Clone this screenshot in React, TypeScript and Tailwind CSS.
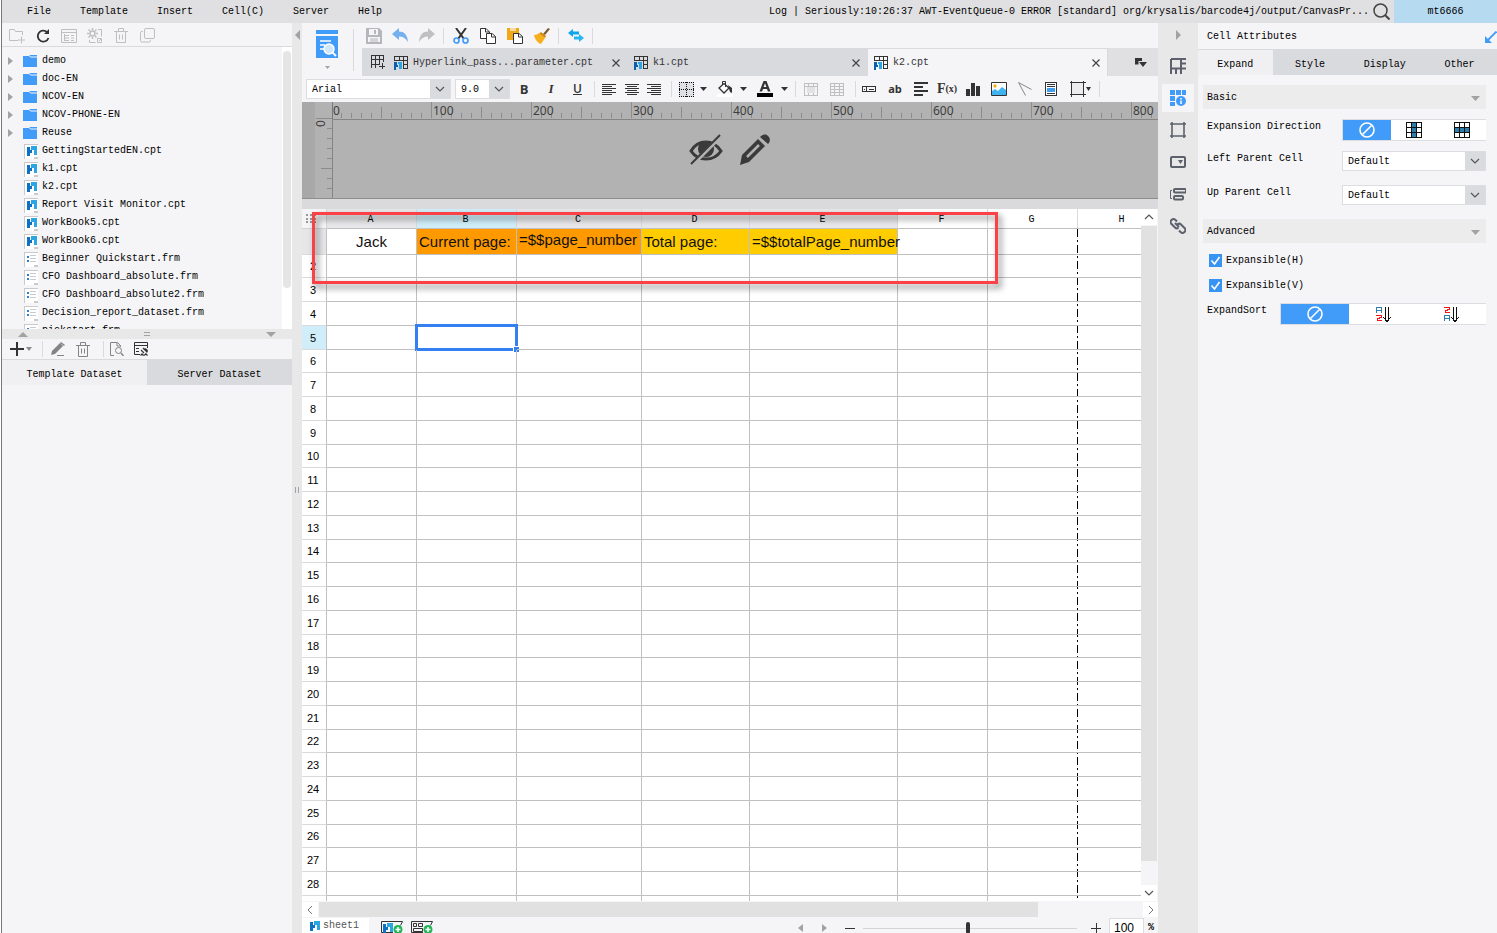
import { useState } from 'react';
import type { ReactNode } from 'react';
import clsx from 'clsx';

const BLUE = '#419bf9';
const DARK = '#333334';
const MUTED = '#bfbfc1';

const MENUS = ['File', 'Template', 'Insert', 'Cell(C)', 'Server', 'Help'];
const FOLDERS = ['demo', 'doc-EN', 'NCOV-EN', 'NCOV-PHONE-EN', 'Reuse'];
const FILES = [
  'GettingStartedEN.cpt',
  'k1.cpt',
  'k2.cpt',
  'Report Visit Monitor.cpt',
  'WorkBook5.cpt',
  'WorkBook6.cpt',
  'Beginner Quickstart.frm',
  'CFO Dashboard_absolute.frm',
  'CFO Dashboard_absolute2.frm',
  'Decision_report_dataset.frm',
  'pickstart.frm',
];
const DOCS = ['Hyperlink_pass...parameter.cpt', 'k1.cpt', 'k2.cpt'];

const COLUMNS = [
  { id: 'A', width: 'w-[90px]' },
  { id: 'B', width: 'w-[100px]' },
  { id: 'C', width: 'w-[125px]' },
  { id: 'D', width: 'w-[108px]' },
  { id: 'E', width: 'w-[148px]' },
  { id: 'F', width: 'w-[90px]' },
  { id: 'G', width: 'w-[90px]' },
  { id: 'H', width: 'w-[90px]' },
];

const CELLS: Record<string, { text: string; className: string }> = {
  A1: { text: 'Jack', className: 'text-center' },
  B1: { text: 'Current page:', className: 'bg-[#ff9900]' },
  C1: { text: '=$$page_number', className: 'bg-[#ff9900] align-top' },
  D1: { text: 'Total page:', className: 'bg-[#ffcc00]' },
  E1: { text: '=$$totalPage_number', className: 'bg-[#ffcc00]' },
};

const ROWS = Array.from({ length: 34 }, (_, i) => i + 1);

function Svg({ w = 16, h = 16, children, crisp }: { w?: number; h?: number; children: ReactNode; crisp?: boolean }) {
  return (
    <svg
      width={w}
      height={h}
      viewBox={`0 0 ${w} ${h}`}
      fill="none"
      className="block shrink-0"
      shapeRendering={crisp ? 'crispEdges' : undefined}
      aria-hidden="true"
    >
      {children}
    </svg>
  );
}

function Caret({ color = DARK }: { color?: string }) {
  return (
    <Svg w={7} h={4}>
      <path d="M0 0h7L3.500 4z" fill={color} />
    </Svg>
  );
}

function Chevron({ d = 'M1 1l4 4 4-4' }: { d?: string }) {
  return (
    <Svg w={10} h={6}>
      <path d={d} stroke="#555" strokeWidth="1.2" />
    </Svg>
  );
}

function ToolButton({ label, className, children }: { label: string; className: string; children: ReactNode }) {
  return (
    <button type="button" aria-label={label} title={label} className={clsx('flex shrink-0 items-center justify-center', className)}>
      {children}
    </button>
  );
}

function Divider({ className }: { className: string }) {
  return (
    <span className={clsx('flex shrink-0 justify-center', className)}>
      <span className="h-4 w-px bg-[#dadadc]" />
    </span>
  );
}

function TrashIcon({ color }: { color: string }) {
  return (
    <Svg w={14} h={15}>
      <path d="M0 3.500h14M4.500 3V.5h5V3M2.500 4v10.500h9V4M5.500 6.500v5M8.500 6.500v5" stroke={color} />
    </Svg>
  );
}

function FolderIcon() {
  return (
    <Svg w={14} h={12}>
      <path d="M0 1h6l1-1h7v12H0z" fill={BLUE} />
      <path d="M6 .5l1.500 1.500H14" stroke="#f5f5f7" />
    </Svg>
  );
}

function HLogo({ x = 0, y = 0 }: { x?: number; y?: number }) {
  return (
    <g transform={`translate(${x} ${y})`}>
      <path d="M0 1h3v3h2v3H3v3H0z" fill="#0c70c4" />
      <path d="M4 0h6v9H7V4H4z" fill="#2ba6e3" />
    </g>
  );
}

function FileIcon({ form }: { form: boolean }) {
  return (
    <Svg w={14} h={15} crisp>
      <path d="M0 0h14v15H0z" fill="#fff" />
      <path d="M.5 15V.5H14" stroke="#c9cacc" />
      <path d="M10 13h4v2h-4z" fill="#c9cacc" />
      {form ? (
        <>
          <path d="M3 4h2v2H3zM3 8h2v2H3z" fill="#2a7fd4" />
          <path d="M6 3.500h6M6 6.500h6M6 9.500h6" stroke="#c9cacc" />
        </>
      ) : (
        <HLogo x={3} y={2} />
      )}
    </Svg>
  );
}

function SheetIcon() {
  return (
    <Svg w={14} h={14} crisp>
      <path d="M.5 5V.5h13v12H9M.5 4.500h13M5.500 0v5M9.500 0v13M9 8.500h5" stroke={DARK} />
      <path d="M0 6h3v3h1v2H2v3H0z" fill="#0c5fae" />
      <path d="M4 6h4v7H5V8H4z" fill="#2ba6e3" />
    </Svg>
  );
}

function AlignIcon({ d }: { d: string }) {
  return (
    <Svg w={14} h={13} crisp>
      <path d={d} stroke={DARK} />
    </Svg>
  );
}

function NoneIcon() {
  return (
    <Svg>
      <circle cx="8" cy="8" r="7" stroke="#fff" strokeWidth="1.600" />
      <path d="M3.500 12.500l9-9" stroke="#fff" strokeWidth="1.600" />
    </Svg>
  );
}

function GridIcon({ fill }: { fill: string }) {
  return (
    <Svg crisp>
      <path d="M0 0h16v16H0z" fill="#fff" />
      <path d={fill} fill="#2f7fae" />
      <path d="M.5.5h15v15H.5zM5.500 0v16M10.500 0v16M0 5.500h16M0 10.500h16" stroke="#111" />
    </Svg>
  );
}

function SortIcon({ reverse }: { reverse?: boolean }) {
  const a = 'M.5 6V.5h5V6M0 3.500h6';
  const z = 'M0 .5h5.500V2.500H3.500V3.500H1.500V5.500H6';
  return (
    <Svg w={15} h={15} crisp>
      <path d={reverse ? z : a} stroke={reverse ? '#f01818' : '#2f7fae'} />
      <g transform="translate(0 8)">
        <path d={reverse ? a : z} stroke={reverse ? '#2f7fae' : '#f01818'} />
      </g>
      <path d="M9.500 0v12M12.500 0v12M7.500 10.500l3.500 4 3.500-4" stroke="#111" />
    </Svg>
  );
}

function Dropdown({ label, value, className, arrow }: { label: string; value: string; className: string; arrow: string }) {
  return (
    <span className={clsx('grid h-5 shrink-0 border border-[#dcdde0] bg-white', className)}>
      <select aria-label={label} defaultValue={value} className="min-w-0 appearance-none bg-transparent pt-px pl-[5px] outline-none [grid-area:1/1]">
        <option>{value}</option>
      </select>
      <span className={clsx('pointer-events-none flex items-center justify-center justify-self-end bg-[#d9dbde] [grid-area:1/1]', arrow)}>
        <Chevron />
      </span>
    </span>
  );
}

function MenuBar() {
  return (
    <header className="flex h-[23px] shrink-0 items-center bg-[#e0e0e2]">
      <nav className="flex gap-[29px] pl-[25px]">
        {MENUS.map((menu) => (
          <button key={menu} type="button">
            {menu}
          </button>
        ))}
      </nav>
      <div className="ml-auto flex h-full items-center">
        <p className="whitespace-pre">
          Log | Seriously:10:26:37 AWT-EventQueue-0 ERROR [standard] org/krysalis/barcode4j/output/CanvasPr...
        </p>
        <ToolButton label="Search" className="w-[25px]">
          <Svg w={17} h={17}>
            <circle cx="7.500" cy="7.500" r="6.500" stroke="#444" strokeWidth="1.500" />
            <path d="M12 12l4.500 4.500" stroke="#444" strokeWidth="2" />
          </Svg>
        </ToolButton>
        <button type="button" className="h-full w-[103px] bg-[#b6daf0]">
          mt6666
        </button>
      </div>
    </header>
  );
}

function FileToolbar() {
  return (
    <div className="flex h-6 shrink-0 items-center border-b border-[#dadadc] pt-0.5 pl-0.5">
      <ToolButton label="New folder" className="w-[26px]">
        <Svg>
          <path d="M9 12.500H.5v-11h5l1 2h7V7M12.500 8.500v7M9 12h7" stroke={MUTED} />
        </Svg>
      </ToolButton>
      <ToolButton label="Refresh" className="w-[26px]">
        <Svg w={14} h={14}>
          <path d="M11 3A5.500 5.500 0 1 0 12.500 9" stroke={DARK} strokeWidth="1.800" />
          <path d="M13 0v5H8z" fill={DARK} />
        </Svg>
      </ToolButton>
      <ToolButton label="Show in explorer" className="w-[26px]">
        <Svg>
          <path d="M.5 1.500h15v13H.5zM0 4.500h16M3.500 6v7M3.500 7.500H8M3.500 10H8M3.500 12.500H8M10 7.500h3M10 10h3M10 12.500h3" stroke={MUTED} />
        </Svg>
      </ToolButton>
      <ToolButton label="Settings" className="w-[26px]">
        <Svg>
          <circle cx="5.500" cy="5.500" r="2.500" stroke={MUTED} strokeWidth="1.500" />
          <path d="M5.500 0v2M5.500 9v2M0 5.500h2M9 5.500h2M1.500 1.500L3 3M8 8l1.500 1.500M9.500 1.500L8 3M1.500 9.500L3 8" stroke={MUTED} strokeWidth="1.500" />
          <path d="M11 1.500h3.500v7M2.500 12v2.500h6M10.500 10.500h4v4h-4zM12 13l2-2" stroke={MUTED} />
        </Svg>
      </ToolButton>
      <ToolButton label="Delete" className="w-[26px]">
        <TrashIcon color={MUTED} />
      </ToolButton>
      <ToolButton label="Copy" className="w-[26px]">
        <Svg w={15} h={15}>
          <rect x="4.500" y=".5" width="10" height="10" rx="1.500" stroke={MUTED} />
          <path d="M3 3.500H1.500a1 1 0 0 0-1 1v8a1.500 1.500 0 0 0 1.500 1.500h7a1.500 1.500 0 0 0 1.500-1.500V12" stroke={MUTED} />
        </Svg>
      </ToolButton>
    </div>
  );
}

function FileTree() {
  return (
    <div className="flex h-[282px] shrink-0 overflow-hidden">
      <ul className="min-w-0 flex-1 pt-[5px] pl-1.5">
        {FOLDERS.map((name) => (
          <li key={name}>
            <button type="button" className="flex h-[18px] items-center whitespace-pre">
              <span className="flex w-[15px]">
                <Svg w={5} h={8}>
                  <path d="M0 0l5 4-5 4z" fill="#a2a2a4" />
                </Svg>
              </span>
              <span className="w-[19px]">
                <FolderIcon />
              </span>
              {name}
            </button>
          </li>
        ))}
        {FILES.map((name) => (
          <li key={name}>
            <button type="button" className="flex h-[18px] items-center pl-4 whitespace-pre">
              <span className="w-[18px]">
                <FileIcon form={name.endsWith('.frm')} />
              </span>
              {name}
            </button>
          </li>
        ))}
      </ul>
      <div className="flex w-2.5 justify-center bg-white pt-1">
        <div className="h-[237px] w-2 rounded-full bg-[#e5e5e6]" />
      </div>
    </div>
  );
}

function DatasetPanel() {
  const [tab, setTab] = useState('Template Dataset');
  return (
    <section className="flex min-h-0 flex-1 flex-col">
      <div className="flex h-2.5 shrink-0 items-center justify-between bg-[#e8e8e8] px-4">
        <Svg w={10} h={5}>
          <path d="M5 0l5 5H0z" fill="#a2a2a4" />
        </Svg>
        <Svg w={6} h={4} crisp>
          <path d="M0 .5h6M0 3.500h6" stroke="#a2a2a4" />
        </Svg>
        <Svg w={10} h={5}>
          <path d="M0 0h10L5 5z" fill="#a2a2a4" />
        </Svg>
      </div>
      <div className="flex h-[21px] shrink-0 items-center border-b border-[#dadadc] pl-1.5">
        <ToolButton label="Add dataset" className="w-[26px] gap-0.5">
          <Svg w={14} h={14} crisp>
            <path d="M7 0v14M0 7h14" stroke={DARK} strokeWidth="2" />
          </Svg>
          <Svg w={6} h={4}>
            <path d="M0 0h6L3 4z" fill="#8b8b8d" />
          </Svg>
        </ToolButton>
        <Divider className="w-4" />
        <ToolButton label="Edit" className="w-[15px]">
          <Svg w={14} h={14}>
            <path d="M0 13l1-4 8-8 3 3-8 8z" fill="#848486" />
            <path d="M10 0l4 3-1 1-4-3z" fill="#848486" />
            <path d="M6 13.500h7" stroke="#848486" />
          </Svg>
        </ToolButton>
        <ToolButton label="Delete dataset" className="w-9">
          <TrashIcon color="#848486" />
        </ToolButton>
        <Divider className="w-1" />
        <ToolButton label="Preview" className="w-6">
          <Svg w={14} h={14}>
            <path d="M4 13.500H.5V.5h7l3 3V5M7 1v3h3" stroke="#848486" />
            <circle cx="8.500" cy="8.500" r="3" stroke="#848486" />
            <path d="M11 11l2.500 3" stroke="#848486" strokeWidth="1.500" />
          </Svg>
        </ToolButton>
        <ToolButton label="Connection settings" className="w-6">
          <Svg w={14} h={14}>
            <path d="M6 12.500H.5V.5h13V6M0 3.500h14M2 6.500h3M2 9.500h3" stroke={DARK} />
            <path d="M7 8l3 3M9 6l4 4M8 12.500a2.500 2.500 0 0 0 4-1M9.500 7.500a2 2 0 0 1 3 3M6.500 13.500l2-2M11.500 11.500l2 2" stroke={DARK} strokeWidth="1.200" />
          </Svg>
        </ToolButton>
      </div>
      <div role="tablist" className="grid h-[25px] shrink-0 grid-cols-2">
        {['Template Dataset', 'Server Dataset'].map((name) => (
          <button
            key={name}
            type="button"
            role="tab"
            aria-selected={tab === name}
            onClick={() => setTab(name)}
            className={clsx('pt-1', tab === name ? 'bg-[#f0f0f2]' : 'bg-[#d9dade]')}
          >
            {name}
          </button>
        ))}
      </div>
    </section>
  );
}

function EditToolbar() {
  return (
    <div className="flex h-[25px] items-center">
      <ToolButton label="Save" className="w-6">
        <Svg>
          <path d="M0 0h13l3 3v13H0z" fill="#b5b6b9" />
          <path d="M3 1h9v6H3zM2 9h12v5H2z" fill="#f5f5f7" />
          <path d="M8 2h2v4H8zM4 10.500h8v1H4zM4 12.500h8v1H4z" fill="#b5b6b9" />
        </Svg>
      </ToolButton>
      <ToolButton label="Undo" className="w-[27px]">
        <Svg>
          <path d="M0 6l7-6v3.500c5 0 8.500 3 9 10.500C14 10.500 11 8.500 7 8.500V12z" fill="#74aff0" />
        </Svg>
      </ToolButton>
      <ToolButton label="Redo" className="w-[27px]">
        <Svg>
          <path d="M16 6L9 0v3.500C4 3.500.5 6.500 0 14 2 10.500 5 8.500 9 8.500V12z" fill="#c0c0c2" />
        </Svg>
      </ToolButton>
      <Divider className="w-[7px]" />
      <ToolButton label="Cut" className="w-[27px]">
        <Svg>
          <path d="M3 0l8 11M13 0L5 11" stroke={DARK} strokeWidth="2" />
          <circle cx="3.500" cy="12.500" r="2.500" stroke={BLUE} strokeWidth="1.700" />
          <circle cx="12.500" cy="12.500" r="2.500" stroke={BLUE} strokeWidth="1.700" />
        </Svg>
      </ToolButton>
      <ToolButton label="Copy" className="w-[27px]">
        <Svg>
          <path d="M.5.5H6L9.500 4v6.500h-9z" fill="#fff" stroke={DARK} />
          <path d="M6.500 5.500H12l3.500 3v7h-9z" fill="#fff" stroke={DARK} />
          <path d="M11.500 5.500V9h4M5.500.5V4h4" stroke={DARK} />
        </Svg>
      </ToolButton>
      <ToolButton label="Paste" className="w-[27px]">
        <Svg>
          <path d="M0 0h12v12H0z" fill="#f0a818" />
          <path d="M3 0h6v3H3z" fill="#f8dba0" />
          <path d="M6.500 5.500H12l3.500 3v7h-9z" fill="#fff" stroke={DARK} />
          <path d="M11.500 5.500V9h4" stroke={DARK} />
        </Svg>
      </ToolButton>
      <ToolButton label="Format painter" className="w-[27px]">
        <Svg>
          <path d="M9 6l5-6 2 1-5 6z" fill="#7a5a30" />
          <path d="M7 4l5 4-1 2-6-4z" fill="#d08a14" />
          <path d="M5 5l6 5-4 6C4 15 1 12 0 7c2 0 4-1 5-2z" fill="#f5b01c" />
        </Svg>
      </ToolButton>
      <Divider className="w-[7px]" />
      <ToolButton label="Switch" className="w-[27px]">
        <Svg>
          <path d="M0 5l5-4v2.500h6v3H5V9z" fill="#0ea5ec" />
          <path d="M16 10l-5-4v2.500H6v3h5V14z" fill="#2ab4f0" />
        </Svg>
      </ToolButton>
      <Divider className="w-[7px]" />
    </div>
  );
}

function DocumentTabs() {
  const [active, setActive] = useState('k2.cpt');
  return (
    <div className="flex h-7 bg-[#e0e0e2]">
      <ToolButton label="New sheet" className="w-[26px] bg-[#d9dade] pl-1.5">
        <Svg w={14} h={14} crisp>
          <path d="M9 9.500H.5v-9h12V7M.5 4.500h12M4.500 0v13M8.500 0v9M.5 9v4M11.500 8v6M8 11.500h6" stroke={DARK} />
        </Svg>
      </ToolButton>
      <div className="flex min-w-0 flex-1">
        {DOCS.map((doc) => (
          <div
            key={doc}
            className={clsx(
              'flex max-w-[240px] flex-1 items-center border-t border-r pr-[7px] pl-1.5',
              active === doc ? 'border-[#dadadc] bg-[#f5f5f7]' : 'border-[#d9dade] bg-[#d9dade]',
            )}
          >
            <button type="button" onClick={() => setActive(doc)} className="flex min-w-0 flex-1 items-center gap-[5px] whitespace-pre text-[#333]">
              <SheetIcon />
              {doc}
            </button>
            <button type="button" aria-label={`Close ${doc}`}>
              <Svg w={8} h={8}>
                <path d="M.5.5l7 7M7.500.5l-7 7" stroke="#444" strokeWidth="1.200" />
              </Svg>
            </button>
          </div>
        ))}
      </div>
      <ToolButton label="All tabs" className="w-[50px] pl-4">
        <Svg w={12} h={9}>
          <path d="M0 0h7v3H3.500v3.500H0zM4 4h8L8 9z" fill={DARK} />
        </Svg>
      </ToolButton>
    </div>
  );
}

function FormatToolbar() {
  return (
    <div className="flex h-[26px] shrink-0 items-center pl-1">
      <Dropdown label="Font" value="Arial" className="mr-1 w-[145px]" arrow="w-5" />
      <Dropdown label="Font size" value="9.0" className="w-[55px]" arrow="w-5" />
      <ToolButton label="Bold" className="w-[28px] font-['Open_Sans',sans-serif] text-[13px] font-bold text-[#333334]">B</ToolButton>
      <ToolButton label="Italic" className="w-[26px] font-['Liberation_Serif',serif] text-[13px] font-bold text-[#333334] italic">I</ToolButton>
      <ToolButton label="Underline" className="w-[27px] font-['Open_Sans',sans-serif] text-[12px] font-semibold text-[#333334] underline">U</ToolButton>
      <Divider className="w-[6px]" />
      <ToolButton label="Align left" className="w-6">
        <AlignIcon d="M0 1.500h14M0 3.500h10M0 5.500h14M0 7.500h10M0 9.500h14M0 11.500h10" />
      </ToolButton>
      <ToolButton label="Align center" className="w-[22px]">
        <AlignIcon d="M0 1.500h14M2 3.500h10M0 5.500h14M2 7.500h10M0 9.500h14M2 11.500h10" />
      </ToolButton>
      <ToolButton label="Align right" className="w-[22px]">
        <AlignIcon d="M0 1.500h14M4 3.500h10M0 5.500h14M4 7.500h10M0 9.500h14M4 11.500h10" />
      </ToolButton>
      <Divider className="w-3" />
      <ToolButton label="Borders" className="w-[18px]">
        <Svg w={15} h={15} crisp>
          <path d="M0 0h15v15H0z" fill="#dfe0e3" />
          <path d="M0 .5h15M0 14.500h15M.5 0v15M14.500 0v15M0 7.500h15M7.500 0v15" stroke="#111" strokeDasharray="1 1" />
        </Svg>
      </ToolButton>
      <ToolButton label="Border options" className="w-[17px]"><Caret /></ToolButton>
      <ToolButton label="Fill color" className="w-[25px]">
        <Svg>
          <path d="M0 13h16v3H0z" fill="#fff" />
          <path d="M2 7l5-4.500L12 7l-5 5z" fill="#fff" stroke={DARK} strokeWidth="1.300" />
          <path d="M5.500 4V.5h3V6" stroke={DARK} />
          <path d="M11 4l4 3v5l-2-1z" fill={DARK} />
        </Svg>
      </ToolButton>
      <ToolButton label="Fill options" className="w-[13px]"><Caret /></ToolButton>
      <ToolButton label="Font color" className="w-[30px]">
        <Svg>
          <path d="M2.500 10.500L6.500 0h3l4 10.500h-2.600l-.9-2.500H6l-.9 2.500zM6.600 6h2.800L8 2.200z" fill={DARK} />
          <path d="M0 12h16v4H0z" fill="#000" />
        </Svg>
      </ToolButton>
      <ToolButton label="Font color options" className="w-2"><Caret /></ToolButton>
      <Divider className="w-[14px]" />
      <ToolButton label="Merge cells" className="w-[18px]">
        <Svg w={14} h={13} crisp>
          <path d="M.5.5h13v12H.5zM0 3.500h14M4.500 0v4M9.500 0v4M4.500 10v3M9.500 10v3" stroke={MUTED} />
          <path d="M3 4h8v6H3z" fill="#e2e2e4" />
        </Svg>
      </ToolButton>
      <ToolButton label="Split cells" className="w-[34px]">
        <Svg w={14} h={13} crisp>
          <path d="M.5.5h13v12H.5zM0 3.500h14M0 6.500h14M0 9.500h14M4.500 0v13M9.500 0v13" stroke={MUTED} />
        </Svg>
      </ToolButton>
      <Divider className="w-0.5" />
      <ToolButton label="Data column" className="w-[26px]">
        <Svg w={14} h={6} crisp>
          <path d="M.5.5h13v5H.5zM4.500 0v6M7 3h5M2 3h1" stroke={DARK} />
        </Svg>
      </ToolButton>
      <ToolButton label="Text" className="w-[26px] font-['Open_Sans',sans-serif] text-[11px] font-bold text-[#333334]">ab</ToolButton>
      <ToolButton label="Rich text" className="w-[26px]">
        <Svg w={14} h={14} crisp>
          <path d="M0 1h14M0 5h9M0 9h14M0 13h9" stroke={DARK} strokeWidth="2" />
        </Svg>
      </ToolButton>
      <ToolButton label="Formula" className="w-[26px] font-['Liberation_Serif',serif] text-[14px] font-bold text-[#333334]">
        F<span className="text-[10px]">(x)</span>
      </ToolButton>
      <ToolButton label="Chart" className="w-[26px]">
        <Svg w={14} h={13} crisp>
          <path d="M0 6h4v7H0zM5 0h4v13H5zM10 3h4v10h-4z" fill={DARK} />
        </Svg>
      </ToolButton>
      <ToolButton label="Image" className="w-[26px]">
        <Svg w={16} h={14}>
          <path d="M.5.5h15v13H.5z" fill="#fff" stroke={DARK} />
          <circle cx="4" cy="4" r="1.700" fill="#f5b01c" />
          <path d="M1 13V9l3-2 3 2 4-4 4 3v5z" fill="#3fb2f0" />
        </Svg>
      </ToolButton>
      <ToolButton label="Slope line" className="w-[26px]">
        <Svg w={14} h={14}>
          <path d="M.5.5l13 7M.5.5l7 13" stroke="#888" />
        </Svg>
      </ToolButton>
      <ToolButton label="Sub report" className="w-[26px]">
        <Svg w={12} h={14} crisp>
          <path d="M.5.5h11v13H.5z" fill="#fff" stroke={DARK} />
          <path d="M2 2.500h8M2 4.500h8M2 11.500h8" stroke={DARK} />
          <path d="M2 6h8v4H2z" fill="#3f9ef0" />
        </Svg>
      </ToolButton>
      <ToolButton label="Widget" className="w-[32px]">
        <Svg w={16} h={16} crisp>
          <path d="M1.500 1.500h12v12h-12z" fill="#ececee" stroke={DARK} />
          <path d="M0 1.500h16M0 13.500h16M1.500 0v16M13.500 0v16" stroke={DARK} />
        </Svg>
        <Svg w={5} h={4}>
          <path d="M0 0h5L2.500 4z" fill={DARK} />
        </Svg>
      </ToolButton>
      <Divider className="w-[6px]" />
    </div>
  );
}

function Ruler() {
  const major = Array.from({ length: 9 }, (_, i) => i * 100);
  const ticks = Array.from({ length: 84 }, (_, i) => i * 10);
  const tickSize = (n: number) => (n % 100 === 0 ? 16 : n % 50 === 0 ? 11 : 5);
  return (
    <div className="flex h-[97px] shrink-0 border-b border-[#8e8e8e] bg-[#b2b2b2]">
      <svg width="30" height="96" className="shrink-0" aria-hidden="true">
        <path d="M0 0h13v96H0z" fill="#a8a8a8" />
        {ticks.slice(0, 8).map((n) => (
          <path key={n} d={`M${30 - tickSize(n)} ${n + 16.5}H30`} stroke="#8c8c8c" />
        ))}
        <text transform="translate(23 25) rotate(-90)" className="fill-[#3d3d3d] font-['Noto_Sans',sans-serif] text-[12px]">0</text>
      </svg>
      <div className="flex min-w-0 flex-1 flex-col">
        <svg height="17" className="w-full shrink-0" aria-hidden="true">
          {ticks.map((n) => (
            <path key={n} d={`M${n - 0.5} ${16 - tickSize(n)}V16`} stroke="#8c8c8c" />
          ))}
          <path d="M0.500 0v17" stroke="#777" />
          {major.map((n) => (
            <text key={n} x={n + 1} y="13" className="fill-[#3d3d3d] font-['Noto_Sans',sans-serif] text-[12px]">
              {n}
            </text>
          ))}
        </svg>
        <div className="flex min-h-0 flex-1 justify-center gap-4 border-t border-l border-[#858585] pt-3.5 pr-8">
          <ToolButton label="Hide header" className="h-8">
            <Svg w={34} h={32}>
              <path d="M2 17C6 10 11 8 17 8s11 3 15 9c-4 6-9 8-15 8S6 23 2 17z" stroke="#3a3a3a" strokeWidth="3" />
              <circle cx="17" cy="15" r="8" fill="#3a3a3a" />
              <path d="M2 32L32 2" stroke="#b2b2b2" strokeWidth="4" />
              <path d="M2 30L31 1" stroke="#3a3a3a" strokeWidth="2" />
            </Svg>
          </ToolButton>
          <ToolButton label="Edit header" className="h-8">
            <Svg w={32} h={32}>
              <path d="M1 31l2-10L19 5l7 7-16 16z" fill="#3a3a3a" />
              <path d="M21 3c2-3 6-3 8-1s3 5 0 8z" fill="#3a3a3a" />
              <path d="M8 23L20 11" stroke="#b2b2b2" strokeWidth="2.500" />
            </Svg>
          </ToolButton>
        </div>
      </div>
    </div>
  );
}

function Cell({ id, row }: { id: string; row: number }) {
  const cell = CELLS[id + row];
  return (
    <td
      className={clsx(
        'relative border-b border-[#c0c0c0] px-0.5 py-0 leading-[21px] whitespace-nowrap',
        id !== 'G' && 'border-r',
        cell?.className,
      )}
    >
      {cell?.text}
      {id === 'B' && row === 5 && (
        <span className="absolute -inset-0.5 border-3 border-[#3580f0]">
          <span className="absolute -right-1 -bottom-1 size-1.5 border-t border-l border-white bg-[#3580f0]" />
        </span>
      )}
      {id === 'G' && row === 1 && (
        <svg width="1" height="680" className="absolute top-0 right-0" aria-hidden="true">
          <path d="M.5 0v680" stroke="#000" strokeDasharray="8 3 2 3" />
        </svg>
      )}
    </td>
  );
}

function Sheet() {
  return (
    <div className="flex min-h-0 flex-1">
      <div className="relative min-w-0 flex-1 overflow-hidden bg-white">
        <table className="w-[866px] table-fixed border-separate border-spacing-0 font-['Liberation_Sans',Arial,sans-serif] text-[15px] text-[#111]">
          <thead>
            <tr className="h-5 font-['Liberation_Mono',monospace] text-[10px]">
              <td className="w-[25px] border-r border-b border-[#d4d4d6] bg-[#f5f5f7] p-0 pl-1">
                <Svg w={11} h={9} crisp>
                  <path d="M0 1h11M0 4.500h11M0 8h11" stroke="#999" strokeWidth="2" strokeDasharray="2 2" />
                </Svg>
              </td>
              {COLUMNS.map(({ id, width }, i) => (
                <th
                  key={id}
                  scope="col"
                  className={clsx('border-r border-b border-r-[#dadadc] border-b-[#c0c0c0] p-0 pt-[3px] pr-0.5 font-medium text-black', width, id === 'B' ? 'bg-[#cfeefa]' : i < 5 ? 'bg-[#e8e8ea]' : 'bg-white')}
                >
                  {id}
                </th>
              ))}
            </tr>
          </thead>
          <tbody>
            {ROWS.map((row) => (
              <tr key={row} className={row === 1 ? 'h-[26px]' : row % 4 === 2 ? 'h-[23px]' : 'h-6'}>
                <th
                  scope="row"
                  className={clsx('border-r border-b border-r-[#c0c0c0] border-b-[#dadadc] p-0 pr-0.5 text-[11px] font-normal text-black', row === 1 && 'bg-[#e6e6e8]', row === 5 && 'bg-[#cfeefa]')}
                >
                  {row > 1 && row}
                </th>
                {COLUMNS.map(({ id }) => (
                  <Cell key={id} id={id} row={row} />
                ))}
              </tr>
            ))}
          </tbody>
        </table>
        <div className="pointer-events-none absolute top-[3px] left-2.5 h-[72px] w-[686px] border-3 border-[#fb4145] drop-shadow-[3px_4px_3px_rgba(0,0,0,0.5)]" />
      </div>
      <div className="flex w-[17px] shrink-0 flex-col bg-[#f5f5f7] pr-px">
        <ToolButton label="Scroll up" className="h-4 bg-white">
          <Chevron d="M1 5l4-4 4 4" />
        </ToolButton>
        <div className="mt-px flex-1 bg-[#e1e1e2]" />
        <ToolButton label="Scroll down" className="mt-6 h-4 bg-white">
          <Chevron />
        </ToolButton>
      </div>
    </div>
  );
}

function SheetFooter() {
  const [zoom, setZoom] = useState('100');
  return (
    <footer className="shrink-0">
      <div className="flex h-4 pt-px">
        <ToolButton label="Scroll left" className="mr-px w-4 bg-white">
          <Svg w={6} h={10}>
            <path d="M5 1L1 5l4 4" stroke="#777" />
          </Svg>
        </ToolButton>
        <div className="mr-[105px] flex-1 bg-[#e1e1e2]" />
        <ToolButton label="Scroll right" className="w-[15px] bg-white">
          <Svg w={6} h={10}>
            <path d="M1 1l4 4-4 4" stroke="#777" />
          </Svg>
        </ToolButton>
      </div>
      <div className="flex h-4 items-start overflow-hidden pt-px">
        <button type="button" className="flex h-4 w-[67px] items-center gap-[3px] bg-white pl-2 text-[#555]">
          <Svg w={10} h={10} crisp>
            <HLogo />
          </Svg>
          sheet1
        </button>
        <ToolButton label="Add sheet" className="ml-3 h-4 pt-1">
          <Svg w={22} h={14}>
            <path d="M12 11.500H.5V.5h21l-2 4" stroke={DARK} />
            <HLogo x={2} y={2} />
            <circle cx="17" cy="8.500" r="4.500" fill="#22b455" />
            <path d="M17 6v5M14.500 8.500h5" stroke="#fff" strokeWidth="1.500" />
          </Svg>
        </ToolButton>
        <ToolButton label="Add form" className="ml-2 h-4 pt-1">
          <Svg w={22} h={14}>
            <path d="M12 11.500H.5V.5h21l-2 4M2.500 2.500h3v3h-3zM7.500 2.500h4v3h-4zM2.500 7.500h9v3h-9z" stroke={DARK} />
            <circle cx="17" cy="8.500" r="4.500" fill="#22b455" />
            <path d="M17 6v5M14.500 8.500h5" stroke="#fff" strokeWidth="1.500" />
          </Svg>
        </ToolButton>
        <div className="ml-auto flex h-5 items-center">
          <ToolButton label="Previous sheet" className="w-6">
            <Svg w={5} h={8}><path d="M5 0L0 4l5 4z" fill="#a2a2a4" /></Svg>
          </ToolButton>
          <ToolButton label="Next sheet" className="w-6">
            <Svg w={5} h={8}><path d="M0 0l5 4-5 4z" fill="#a2a2a4" /></Svg>
          </ToolButton>
          <ToolButton label="Zoom out" className="w-[26px]">
            <Svg w={10} h={10} crisp><path d="M0 5.500h10" stroke={DARK} /></Svg>
          </ToolButton>
          <input
            type="range"
            aria-label="Zoom"
            defaultValue={49}
            className="h-5 w-[214px] appearance-none bg-transparent [&::-webkit-slider-runnable-track]:h-px [&::-webkit-slider-runnable-track]:bg-[#d4d4d6] [&::-webkit-slider-thumb]:-mt-1.5 [&::-webkit-slider-thumb]:h-3 [&::-webkit-slider-thumb]:w-1 [&::-webkit-slider-thumb]:appearance-none [&::-webkit-slider-thumb]:rounded-sm [&::-webkit-slider-thumb]:bg-[#333334]"
          />
          <ToolButton label="Zoom in" className="w-8 pl-1.5">
            <Svg w={10} h={10} crisp><path d="M0 5.500h10M5.500 0v10" stroke={DARK} /></Svg>
          </ToolButton>
          <label className="flex items-center gap-1 pr-1 font-bold">
            <input
              aria-label="Zoom percent"
              value={zoom}
              onChange={(event) => setZoom(event.target.value)}
              className="h-5 w-[35px] border border-[#dcdde0] bg-white pl-1 font-['Liberation_Sans',Arial,sans-serif] text-[12px] font-normal"
            />
            %
          </label>
        </div>
      </div>
    </footer>
  );
}

const SIDE_TABS: { label: string; icon: ReactNode }[] = [
  {
    label: 'Cell element',
    icon: <path d="M1 1h15M1 1v15M11 1v9M1 10.500h15M1 15h1M6 11v5M11 11v5M12 5.500h4" stroke="#5c616c" strokeWidth="2" />,
  },
  {
    label: 'Cell attributes',
    icon: (
      <>
        <path d="M0 0h5v5H0zM6 0h5v5H6zM12 0h4v5h-4zM0 6h5v5H0zM0 12h5v4H0z" fill={BLUE} />
        <circle cx="11" cy="11" r="5" fill={BLUE} />
        <path d="M11 8v1.500M11 10.500V14" stroke="#fff" strokeWidth="1.500" />
      </>
    ),
  },
  { label: 'Floating element', icon: <path d="M2 2h12v12H2zM0 2h3M13 2h3M0 14h3M13 14h3M2 0v3M14 0v3M2 13v3M14 13v3" stroke="#5c616c" strokeWidth="1.600" /> },
  {
    label: 'Widget settings',
    icon: (
      <>
        <rect x="1" y="3" width="14" height="10" rx="1" stroke="#5c616c" strokeWidth="2" />
        <path d="M8 6h5l-2.500 4z" fill="#5c616c" />
      </>
    ),
  },
  {
    label: 'Condition attributes',
    icon: (
      <>
        <path d="M2 4.500H.5v8H2" stroke="#5c616c" />
        <rect x="4" y="3" width="12" height="3.500" rx="1" stroke="#5c616c" strokeWidth="2" />
        <rect x="4" y="10" width="9" height="3.500" rx="1" stroke="#5c616c" strokeWidth="2" />
      </>
    ),
  },
  {
    label: 'Hyperlink',
    icon: <path d="M9 9L5 5M7 3.500L5.500 2a2.500 2.500 0 0 0-4 4L5 9.500c1 1 2.500 1 3.500 0M9 12.500l1.500 1.500a2.500 2.500 0 0 0 4-4L11 6.500c-1-1-2.500-1-3.500 0" stroke="#5c616c" strokeWidth="2" />,
  },
];

function SideStrip() {
  const [active, setActive] = useState('Cell attributes');
  return (
    <aside className="flex w-10 shrink-0 flex-col items-center bg-[#e8e8e8]">
      <ToolButton label="Collapse panel" className="mb-[3px] h-6">
        <Svg w={5} h={10}><path d="M0 0l5 5-5 5z" fill="#a2a2a4" /></Svg>
      </ToolButton>
      {SIDE_TABS.map(({ label, icon }) => (
        <button
          key={label}
          type="button"
          aria-label={label}
          onClick={() => setActive(label)}
          className={clsx('my-0.5 flex h-7 w-8 items-center justify-center', active === label && 'bg-[#f5f5f7]')}
        >
          <Svg>{icon}</Svg>
        </button>
      ))}
    </aside>
  );
}

function SectionHeader({ children }: { children: ReactNode }) {
  return (
    <button type="button" className="flex h-6 w-full items-center justify-between bg-[#ececed] pt-0.5 pr-1.5 pl-1">
      {children}
      <Svg w={9} h={5}><path d="M0 0h9L4.500 5z" fill="#a2a2a4" /></Svg>
    </button>
  );
}

function Segments({ labels, icons, className }: { labels: string[]; icons: ReactNode[]; className: string }) {
  const [selected, setSelected] = useState(0);
  return (
    <div className={clsx('grid h-[22px] grid-cols-3 border border-r-0 border-[#dcdde0] bg-white', className)}>
      {labels.map((label, i) => (
        <button
          key={label}
          type="button"
          aria-label={label}
          aria-pressed={selected === i}
          onClick={() => setSelected(i)}
          className={clsx('flex items-center justify-center', selected === i && 'bg-[#419bf9]')}
        >
          {icons[i]}
        </button>
      ))}
    </div>
  );
}

function CheckRow({ label }: { label: string }) {
  return (
    <label className="flex h-[25px] items-center gap-1 pl-1.5">
      <span className="grid">
        <input type="checkbox" defaultChecked className="peer size-[13px] appearance-none border border-[#3894f2] bg-white [grid-area:1/1] checked:bg-[#3894f2]" />
        <span className="pointer-events-none opacity-0 [grid-area:1/1] peer-checked:opacity-100">
          <Svg w={13} h={13}><path d="M2.500 6.500l3 3.500 5-7" stroke="#fff" strokeWidth="1.600" /></Svg>
        </span>
      </span>
      {label}
    </label>
  );
}

function AttributesPanel() {
  const [tab, setTab] = useState('Expand');
  return (
    <aside className="flex w-[299px] shrink-0 flex-col bg-[#f5f5f7]">
      <div className="flex h-[27px] items-center justify-between border-b border-[#dadadc] pt-px pl-[9px]">
        <h2>Cell Attributes</h2>
        <ToolButton label="Pop out" className="">
          <Svg w={12} h={12}>
            <path d="M11.500.5L3 9" stroke={BLUE} strokeWidth="1.800" />
            <path d="M0 5v7h7z" fill={BLUE} />
          </Svg>
        </ToolButton>
      </div>
      <div role="tablist" className="grid h-[25px] grid-cols-4">
        {['Expand', 'Style', 'Display', 'Other'].map((name) => (
          <button
            key={name}
            type="button"
            role="tab"
            aria-selected={tab === name}
            onClick={() => setTab(name)}
            className={clsx('pt-1', tab === name ? 'bg-[#f0f0f2]' : 'bg-[#d9dade]')}
          >
            {name}
          </button>
        ))}
      </div>
      <div className="flex flex-col pt-2.5 pr-[11px] pl-[5px]">
        <SectionHeader>Basic</SectionHeader>
        <div className="mt-2.5 flex justify-between pl-1">
          <span>Expansion Direction</span>
          <Segments
            className="w-36"
            labels={['No expansion', 'Expand vertically', 'Expand horizontally']}
            icons={[<NoneIcon key="n" />, <GridIcon key="v" fill="M5 0h6v16H5z" />, <GridIcon key="h" fill="M0 5h16v6H0z" />]}
          />
        </div>
        <div className="mt-2.5 flex justify-between pl-1">
          <span>Left Parent Cell</span>
          <Dropdown label="Left Parent Cell" value="Default" className="w-36" arrow="w-5" />
        </div>
        <div className="mt-3.5 flex justify-between pl-1">
          <span>Up Parent Cell</span>
          <Dropdown label="Up Parent Cell" value="Default" className="w-36" arrow="w-5" />
        </div>
        <div className="mt-3.5">
          <SectionHeader>Advanced</SectionHeader>
        </div>
        <div className="mt-[5px]">
          <CheckRow label="Expansible(H)" />
          <CheckRow label="Expansible(V)" />
        </div>
        <div className="mt-[5px] flex justify-between pl-1">
          <span>ExpandSort</span>
          <Segments
            className="w-[206px]"
            labels={['No sort', 'Ascending', 'Descending']}
            icons={[<NoneIcon key="n" />, <SortIcon key="a" />, <SortIcon key="d" reverse />]}
          />
        </div>
      </div>
    </aside>
  );
}

export default function App() {
  return (
    <div className="ml-px flex h-screen flex-col overflow-hidden border-l border-[#77777b] bg-[#f5f5f7] font-['Liberation_Mono','Courier_New',monospace] text-[10px] leading-4 text-black">
      <MenuBar />
      <div className="flex min-h-0 flex-1">
        <aside className="flex w-[290px] shrink-0 flex-col">
          <FileToolbar />
          <FileTree />
          <DatasetPanel />
        </aside>
        <div className="flex w-2.5 shrink-0 flex-col items-center bg-[#e8e8e8]">
          <ToolButton label="Collapse" className="h-6">
            <Svg w={5} h={10}><path d="M5 0L0 5l5 5z" fill="#a2a2a4" /></Svg>
          </ToolButton>
          <span className="my-auto h-1.5 w-1 border-x border-[#a2a2a4]" />
        </div>
        <main className="flex min-w-0 flex-1 flex-col">
          <div className="flex shrink-0">
            <div className="flex w-[60px] items-center justify-between pr-2 pl-3.5">
              <button type="button" aria-label="Preview template" className="flex flex-col items-center gap-2">
                <Svg w={22} h={28}>
                  <path d="M0 0h22v4H0zM0 6h22v22H0z" fill={BLUE} />
                  <path d="M4 11h11M4 15h5M4 19h4" stroke="#fff" strokeWidth="1.500" />
                  <circle cx="13" cy="19" r="5" fill="#cfe6fd" stroke="#fff" strokeWidth="1.500" />
                  <path d="M16.500 22.500L20 26" stroke="#fff" strokeWidth="2" />
                </Svg>
                <Svg w={5} h={3}><path d="M0 0h5L2.500 3z" fill="#a2a2a4" /></Svg>
              </button>
              <span className="h-[42px] w-px bg-[#dadadc]" />
            </div>
            <div className="min-w-0 flex-1">
              <EditToolbar />
              <DocumentTabs />
            </div>
          </div>
          <FormatToolbar />
          <Ruler />
          <div className="h-2.5 shrink-0 bg-[#dadadc]" />
          <Sheet />
          <SheetFooter />
        </main>
        <SideStrip />
        <AttributesPanel />
      </div>
    </div>
  );
}
